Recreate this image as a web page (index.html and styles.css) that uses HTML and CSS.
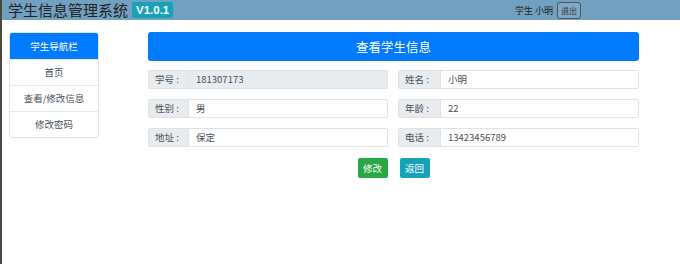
FILE: index.html
```html
<!DOCTYPE html>
<html lang="zh">
<head>
<meta charset="utf-8">
<title>学生信息管理系统</title>
<link rel="stylesheet" href="styles.css">
</head>
<body>
<div class="page">
  <header class="topbar">
    <div class="brand">
      <span class="brand-title">学生信息管理系统</span>
      <span class="badge">V1.0.1</span>
    </div>
    <div class="user">
      <span class="user-name">学生 小明</span>
      <button class="logout">退出</button>
    </div>
  </header>
  <div class="content">
    <nav class="sidenav">
      <div class="nav-item active">学生导航栏</div>
      <div class="nav-item">首页</div>
      <div class="nav-item">查看/修改信息</div>
      <div class="nav-item">修改密码</div>
    </nav>
    <main class="main">
      <div class="banner">查看学生信息</div>
      <div class="grid">
        <div class="group"><span class="addon">学号 :</span><span class="field readonly">181307173</span></div>
        <div class="group"><span class="addon">姓名 :</span><span class="field">小明</span></div>
        <div class="group"><span class="addon">性别 :</span><span class="field">男</span></div>
        <div class="group"><span class="addon">年龄 :</span><span class="field">22</span></div>
        <div class="group"><span class="addon">地址 :</span><span class="field">保定</span></div>
        <div class="group"><span class="addon">电话 :</span><span class="field">13423456789</span></div>
      </div>
      <div class="actions">
        <button class="btn btn-green">修改</button>
        <button class="btn btn-teal">返回</button>
      </div>
    </main>
  </div>
</div>
</body>
</html>
```
FILE: styles.css
```css
html, body {
  margin: 0;
  padding: 0;
}
body {
  background: #ffffff;
  font-family: "Noto Sans CJK SC", "Noto Sans", sans-serif;
  color: #495057;
  border-left: 2px solid #4a4a42;
  min-height: 264px;
  box-sizing: border-box;
}
.page {
  display: flex;
  flex-direction: column;
}
.topbar {
  height: 20px;
  background: #72a0c1;
  display: flex;
  align-items: center;
  justify-content: space-between;
  padding: 0 0 0 6px;
}
.brand {
  display: flex;
  align-items: center;
  gap: 4px;
}
.brand-title {
  font-size: 15px;
  color: #222;
  line-height: 20px;
}
.badge {
  background: #17a2b8;
  color: #fff;
  font-family: "Liberation Sans", sans-serif;
  font-weight: bold;
  font-size: 11.5px;
  height: 16px;
  line-height: 16px;
  padding: 0 4px;
  border-radius: 2px;
}
.user {
  display: flex;
  align-items: center;
  gap: 4px;
  margin-right: 99px;
}
.user-name {
  font-size: 9px;
  color: #222;
}
.logout {
  font-family: "Noto Sans CJK SC", sans-serif;
  font-size: 8px;
  color: #333;
  background: #7ea9c7;
  border: 1px solid #555;
  border-radius: 3px;
  width: 24px;
  height: 17px;
  padding: 0;
  margin-top: 1px;
}
.content {
  display: flex;
  align-items: flex-start;
  padding-top: 12px;
  padding-left: 7px;
}
.sidenav {
  width: 90px;
  border: 1px solid #e3e6e9;
  border-radius: 3px;
  box-sizing: border-box;
  overflow: hidden;
}
.nav-item {
  height: 25px;
  line-height: 25px;
  text-align: center;
  font-size: 9.5px;
  color: #495057;
  border-top: 1px solid #e8eaed;
}
.nav-item.active {
  background: #007bff;
  color: #fff;
  border-top: none;
  height: 26px;
  line-height: 26px;
}
.main {
  width: 491px;
  margin-left: 49px;
}
.banner {
  height: 29px;
  line-height: 29px;
  background: #007bff;
  color: #fff;
  text-align: center;
  font-size: 12.5px;
  border-radius: 3px;
}
.grid {
  display: grid;
  grid-template-columns: 240px 241px;
  column-gap: 10px;
  row-gap: 10px;
  margin-top: 9px;
}
.group {
  display: flex;
  height: 19px;
  border: 1px solid #dfe2e6;
  border-radius: 2px;
  box-sizing: border-box;
  font-size: 9.5px;
  line-height: 17px;
}
.addon {
  width: 40px;
  flex: none;
  background: #e9ecef;
  color: #495057;
  padding-left: 6px;
  box-sizing: border-box;
  border-right: 1px solid #dfe2e6;
  white-space: pre;
}
.group:nth-child(2n) .addon {
  width: 42px;
}
.field {
  flex: 1;
  padding-left: 7px;
  color: #495057;
  background: #fff;
}
.field.readonly {
  background: #e9ecef;
}
.actions {
  display: flex;
  justify-content: center;
  gap: 12px;
  margin-top: 11px;
}
.btn {
  width: 30px;
  height: 20px;
  border: none;
  border-radius: 2px;
  color: #fff;
  font-family: "Noto Sans CJK SC", sans-serif;
  font-size: 9.5px;
  padding: 0;
}
.btn-green { background: #28a745; }
.btn-teal { background: #17a2b8; }
```
